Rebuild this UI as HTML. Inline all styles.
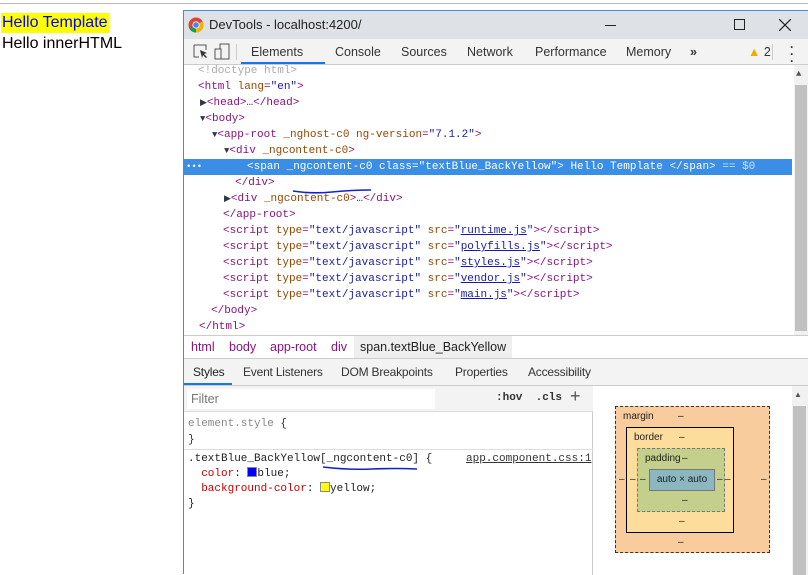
<!DOCTYPE html>
<html><head><style>
*{margin:0;padding:0;box-sizing:border-box}
body{width:808px;height:574px;overflow:hidden;background:#fff;font-family:"Liberation Sans",sans-serif;position:relative}
.abs{position:absolute}
.mono{font-family:"Liberation Mono",monospace;font-size:11px;white-space:pre}
.t{color:#881280}.a{color:#994500}.v{color:#1a1aa6}.g{color:#303942}
.ln{position:absolute;height:16px;line-height:16px}
.tab{position:absolute;top:0;height:26px;line-height:26px;font-size:12.5px;color:#333}
.st{position:absolute;height:26px;line-height:26px;font-size:12px;color:#333;letter-spacing:-0.2px}
</style></head><body>
<div class="abs" style="left:0;top:3px;width:808px;height:1px;background:#bbb"></div>
<div class="abs" style="left:1px;top:13px;font-size:16px;line-height:20px;background:#ff0;color:#00f;padding:0 1px">Hello Template</div>
<div class="abs" style="left:2px;top:34px;font-size:16px;line-height:20px;color:#000">Hello innerHTML</div>

<div class="abs" style="left:183px;top:10px;width:625px;height:564px;border:1px solid #3a8ee6;border-right:none;border-bottom:none;background:#fff">
 <div class="abs" style="left:0;top:0;width:624px;height:28px;background:#dee1e6"></div>
 <svg class="abs" style="left:4px;top:6px" width="16" height="16" viewBox="0 0 16 16"><circle cx="8" cy="8" r="7.5" fill="#db4437"/><path d="M8 8 L1.5 11.8 A7.5 7.5 0 0 0 12 14.4Z" fill="#0f9d58"/><path d="M8 8 L14.5 4.2 A7.5 7.5 0 0 1 8 15.5 Z" fill="#f4b400"/><circle cx="8" cy="8" r="3.6" fill="#fff"/><circle cx="8" cy="8" r="2.8" fill="#4285f4"/></svg>
 <div class="abs" style="left:25px;top:6px;font-size:13px;color:#222">DevTools - localhost:4200/</div>
 <div class="abs" style="left:421px;top:14px;width:11px;height:1px;background:#222"></div>
 <div class="abs" style="left:550px;top:8px;width:11px;height:11px;border:1px solid #222"></div>
 <svg class="abs" style="left:595px;top:8px" width="12" height="12"><path d="M0 0L12 12M12 0L0 12" stroke="#222" stroke-width="1.2"/></svg>
 <div class="abs" style="left:0;top:28px;width:624px;height:26px;background:#f3f3f3;border-bottom:1px solid #ccc">
  <svg class="abs" style="left:9px;top:5px" width="16" height="16"><path d="M1 1h12v5M1 1v12h5" fill="none" stroke="#555"/><path d="M7 6l7 3-3 1 3 3-1 1-3-3-1 3z" fill="#333"/></svg>
  <svg class="abs" style="left:30px;top:4px" width="16" height="18"><rect x="6" y="1" width="9" height="15" fill="none" stroke="#555"/><rect x="1" y="6" width="6" height="10" fill="#f3f3f3" stroke="#555"/></svg>
  <div class="abs" style="left:52px;top:5px;width:1px;height:16px;background:#ccc"></div>
  <div class="tab" style="left:67px">Elements</div>
  <div class="abs" style="left:57px;top:23px;width:84px;height:2px;background:#1a73e8"></div>
  <div class="tab" style="left:151px">Console</div>
  <div class="tab" style="left:217px">Sources</div>
  <div class="tab" style="left:283px">Network</div>
  <div class="tab" style="left:351px">Performance</div>
  <div class="tab" style="left:442px">Memory</div>
  <div class="tab" style="left:506px;font-weight:bold">»</div>
  <div class="tab" style="left:564px;color:#333"><span style="color:#f2a900">▲</span> 2</div>
  <div class="abs" style="left:588px;top:5px;width:1px;height:16px;background:#ccc"></div>
  <div class="tab" style="left:606px;font-weight:bold;line-height:7px;top:5px;font-size:12px">·<br>·<br>·</div>
 </div>
 <div class="abs mono" style="left:0;top:54px;width:624px;height:270px">
  <div class="abs" style="left:610px;top:0;width:14px;height:270px;background:#f1f1f1"></div>
  <div class="abs" style="left:611px;top:20px;width:12px;height:246px;background:#c1c1c1"></div>
  <div class="abs" style="left:612px;top:4px;font-size:9px;color:#555">▲</div>
  <div class="ln" style="left:14px;top:-2px;color:#aaa">&lt;!doctype html&gt;</div>
  <div class="ln t" style="left:14px;top:14px">&lt;html <span class="a">lang</span>=<span class="v">"en"</span>&gt;</div>
  <div class="ln t" style="left:16px;top:30px"><span class="g" style="font-size:9px">▶</span>&lt;head&gt;<span class="g">…</span>&lt;/head&gt;</div>
  <div class="ln t" style="left:16px;top:46px"><span class="g" style="font-size:9px">▼</span>&lt;body&gt;</div>
  <div class="ln t" style="left:28px;top:62px"><span class="g" style="font-size:9px">▼</span>&lt;app-root <span class="a">_nghost-c0 ng-version</span>=<span class="v">"7.1.2"</span>&gt;</div>
  <div class="ln t" style="left:40px;top:78px"><span class="g" style="font-size:9px">▼</span>&lt;div <span class="a">_ngcontent-c0</span>&gt;</div>
  <div class="ln" style="left:0;top:94px;width:608px;background:#3a8ee6;color:#fff"></div>
  <div class="ln" style="left:2px;top:94px;color:#fff;font-size:9px">•••</div>
  <div class="ln" style="left:63px;top:94px;color:#fff">&lt;span _ngcontent-c0 class="textBlue_BackYellow"&gt; Hello Template &lt;/span&gt; <span style="color:#cfe3fa">== $0</span></div>
  <div class="ln t" style="left:51px;top:110px">&lt;/div&gt;</div>
  <svg class="abs" style="left:108px;top:122px" width="80" height="8"><path d="M1 4 Q20 7 40 5 T79 3" stroke="#1122cc" stroke-width="1.6" fill="none"/></svg>
  <div class="ln t" style="left:40px;top:126px"><span class="g" style="font-size:9px">▶</span>&lt;div <span class="a">_ngcontent-c0</span>&gt;<span class="g">…</span>&lt;/div&gt;</div>
  <div class="ln t" style="left:39px;top:142px">&lt;/app-root&gt;</div>
  <div class="ln t" style="left:39px;top:158px">&lt;script <span class="a">type</span>=<span class="v">"text/javascript"</span> <span class="a">src</span>=<span class="v">"<u>runtime.js</u>"</span>&gt;&lt;/script&gt;</div>
  <div class="ln t" style="left:39px;top:174px">&lt;script <span class="a">type</span>=<span class="v">"text/javascript"</span> <span class="a">src</span>=<span class="v">"<u>polyfills.js</u>"</span>&gt;&lt;/script&gt;</div>
  <div class="ln t" style="left:39px;top:190px">&lt;script <span class="a">type</span>=<span class="v">"text/javascript"</span> <span class="a">src</span>=<span class="v">"<u>styles.js</u>"</span>&gt;&lt;/script&gt;</div>
  <div class="ln t" style="left:39px;top:206px">&lt;script <span class="a">type</span>=<span class="v">"text/javascript"</span> <span class="a">src</span>=<span class="v">"<u>vendor.js</u>"</span>&gt;&lt;/script&gt;</div>
  <div class="ln t" style="left:39px;top:222px">&lt;script <span class="a">type</span>=<span class="v">"text/javascript"</span> <span class="a">src</span>=<span class="v">"<u>main.js</u>"</span>&gt;&lt;/script&gt;</div>
  <div class="ln t" style="left:27px;top:238px">&lt;/body&gt;</div>
  <div class="ln t" style="left:15px;top:254px">&lt;/html&gt;</div>
 </div>
 <div class="abs" style="left:0;top:324px;width:624px;height:24px;border-top:1px solid #ccc;border-bottom:1px solid #ccc;font-size:12.5px;line-height:22px;color:#881280">
  <span class="abs" style="left:7px">html</span><span class="abs" style="left:45px">body</span><span class="abs" style="left:86px">app-root</span><span class="abs" style="left:147px">div</span>
  <span class="abs" style="left:170px;top:0;height:22px;padding:0 6px;background:#eee;color:#222">span.textBlue_BackYellow</span>
 </div>
 <div class="abs" style="left:0;top:348px;width:624px;height:27px;background:#f3f3f3;border-bottom:1px solid #ccc">
  <div class="st" style="left:9px;color:#222">Styles</div>
  <div class="abs" style="left:0;top:24px;width:48px;height:2px;background:#1a73e8"></div>
  <div class="st" style="left:59px">Event Listeners</div>
  <div class="st" style="left:157px">DOM Breakpoints</div>
  <div class="st" style="left:271px">Properties</div>
  <div class="st" style="left:344px">Accessibility</div>
 </div>
 <div class="abs" style="left:0;top:375px;width:409px;height:189px;border-right:1px solid #ccc">
  <div class="abs" style="left:0;top:0;width:409px;height:26px;background:#f3f3f3;border-bottom:1px solid #ddd"></div>
  <div class="abs" style="left:3px;top:3px;width:248px;height:20px;background:#fff;font-size:12.5px;line-height:20px;color:#777;padding-left:4px">Filter</div>
  <div class="abs mono" style="left:312px;top:6px;color:#333;font-weight:bold">:hov  .cls</div>
  <div class="abs" style="left:386px;top:0px;font-size:18px;color:#555">+</div>
  <div class="abs mono" style="left:4px;top:30px;line-height:16px;color:#888">element.style <span style="color:#333">{</span><br><span style="color:#333">}</span></div>
  <div class="abs" style="left:0;top:63px;width:409px;height:1px;background:#ddd"></div>
  <div class="abs mono" style="left:4px;top:66px;line-height:15px;color:#222">.textBlue_BackYellow[_ngcontent-c0] {<br>  <span style="color:#c80000">color</span>: <span style="display:inline-block;width:10px;height:10px;background:#00f;border:1px solid #888;vertical-align:-1px"></span>blue;<br>  <span style="color:#c80000">background-color</span>: <span style="display:inline-block;width:10px;height:10px;background:#ff0;border:1px solid #888;vertical-align:-1px"></span>yellow;<br>}</div>
  <div class="abs mono" style="left:282px;top:66px;line-height:15px;color:#333;text-decoration:underline">app.component.css:1</div>
  <svg class="abs" style="left:138px;top:78px" width="96" height="8"><path d="M1 3 Q25 6 50 5 T95 5" stroke="#1122cc" stroke-width="1.6" fill="none"/></svg>
 </div>
 <div class="abs" style="left:410px;top:375px;width:214px;height:189px;font-size:10px;color:#222">
  <div class="abs" style="left:198px;top:0;width:16px;height:189px;background:#f1f1f1"></div>
  <div class="abs" style="left:199px;top:20px;width:13px;height:169px;background:#c1c1c1"></div>
  <div class="abs" style="left:200px;top:4px;font-size:8px;color:#555">▲</div>
  <div class="abs" style="left:21px;top:20px;width:155px;height:147px;background:#f9cc9d;border:1px dashed #333">
   <span class="abs" style="left:7px;top:4px">margin</span><span class="abs" style="left:62px;top:4px">–</span><span class="abs" style="left:62px;top:130px">–</span>
   <span class="abs" style="left:3px;top:67px">–</span><span class="abs" style="left:145px;top:67px">–</span>
   <div class="abs" style="left:10px;top:20px;width:108px;height:106px;background:#fddd9b;border:1px solid #000">
    <span class="abs" style="left:7px;top:4px">border</span><span class="abs" style="left:52px;top:4px">–</span><span class="abs" style="left:52px;top:88px">–</span>
    <span class="abs" style="left:3px;top:46px">–</span><span class="abs" style="left:98px;top:46px">–</span>
    <div class="abs" style="left:10px;top:20px;width:88px;height:64px;background:#c3cf8a;border:1px dashed #777">
     <span class="abs" style="left:7px;top:4px">padding</span><span class="abs" style="left:44px;top:4px">–</span><span class="abs" style="left:44px;top:46px">–</span>
     <span class="abs" style="left:2px;top:25px">–</span><span class="abs" style="left:79px;top:25px">–</span>
     <div class="abs" style="left:11px;top:20px;width:66px;height:22px;background:#8cb6c0;border:1px solid #777;text-align:center;line-height:20px">auto × auto</div>
    </div>
   </div>
  </div>
 </div>
</div>
</body></html>
